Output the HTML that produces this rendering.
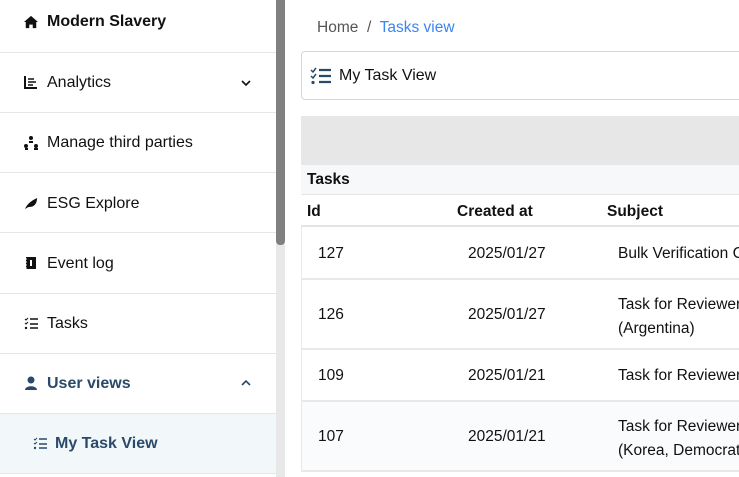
<!DOCTYPE html>
<html><head><style>
*{box-sizing:border-box;margin:0;padding:0}
html,body{width:739px;height:477px;overflow:hidden}
body{font-family:"Liberation Sans",sans-serif;background:#fff;position:relative;color:#111}
.sb{position:absolute;left:0;top:0;width:276px;height:477px}
.row{position:absolute;left:0;width:276px;height:60px;border-bottom:1.5px solid #e6e6e6;font-size:16px}
.row .ic{position:absolute;left:24px;width:14px;height:14px}
.row span.t{position:absolute;left:47px}
.chev{position:absolute;left:241px;width:10px;height:8px}
.scroll{position:absolute;left:276px;top:0;width:9px;height:477px;background:#e8e8e8}
.thumb{position:absolute;left:276px;top:0;width:9px;height:245px;background:#808080;border-radius:0 0 4px 4px}
.bc{position:absolute;left:317px;top:19px;font-size:15.5px;color:#555}
.bc b{font-weight:normal;color:#3d84f0}
.card{position:absolute;left:301px;top:51px;width:438px;height:49px;border:1px solid #d6d6d6;border-right:none;border-radius:4px 0 0 4px}
.card span{position:absolute;left:37px;top:15px;font-size:16px}
.grey{position:absolute;left:301px;top:116px;width:438px;height:49px;background:#e7e7e7}
.tk{position:absolute;left:301px;top:165px;width:438px;height:30px;background:#f7f8fa;border-bottom:1px solid #e6e6e6;font-weight:bold;font-size:15.5px;padding:6px 0 0 6px}
.hd{position:absolute;left:301px;top:195px;width:438px;height:32px;border-bottom:2px solid #e4e4e4;font-weight:bold;font-size:15.5px}
.hd span,.tr span{position:absolute}
.tr{position:absolute;left:301px;width:438px;border-bottom:2px solid #e8e8e8;border-left:1px solid #e8e8e8;font-size:15.5px;overflow:hidden}
</style></head><body>
<div class="sb">
<div class="row" style="top:0;height:53px;font-weight:bold"><svg class="ic" viewBox="0 0 16 14" style="top:15px"><path d="M8 0L0 7h2v7h4v-4h4v4h4V7h2z" fill="#111"/></svg><span class="t" style="top:13px">Modern Slavery</span></div>
<div class="row" style="top:53px"><svg class="ic" viewBox="0 0 14 14" style="top:22px"><path d="M1 1v12h12" stroke="#111" stroke-width="2" fill="none"/><path d="M4 4h6M4 7h8M4 10h5" stroke="#111" stroke-width="1.6"/></svg><span class="t" style="top:21px">Analytics</span><svg class="chev" style="top:26px" viewBox="0 0 10 8"><path d="M1 2l4 4 4-4" stroke="#111" stroke-width="1.6" fill="none"/></svg></div>
<div class="row" style="top:113px"><svg class="ic" viewBox="0 0 14 14" style="top:23px"><circle cx="7" cy="2" r="2" fill="#111"/><circle cx="2" cy="10" r="2" fill="#111"/><circle cx="12" cy="10" r="2" fill="#111"/><path d="M1 12h3v2H1zM10 12h4v2h-4zM5 5h4v2H5z" fill="#111"/></svg><span class="t" style="top:21px">Manage third parties</span></div>
<div class="row" style="top:173px"><svg class="ic" viewBox="0 0 14 14" style="top:23px"><path d="M1 13C3 8 7 5 13 2c0 6-3 9-8 9-1 0-2 1-4 2z" fill="#111"/></svg><span class="t" style="top:22px">ESG Explore</span></div>
<div class="row" style="top:234px"><svg class="ic" viewBox="0 0 14 14" style="top:22px"><rect x="2" y="1" width="10" height="12" fill="#111"/><rect x="6" y="4" width="2" height="6" fill="#fff"/><path d="M1 3h2M1 6h2M1 9h2M1 12h2" stroke="#fff"/></svg><span class="t" style="top:21px">Event log</span></div>
<div class="row" style="top:294px"><svg class="ic" viewBox="0 0 14 14" style="top:23px"><path d="M1 2l1 1 2-2M1 6l1 1 2-2" stroke="#111" fill="none"/><circle cx="2" cy="11" r="1.2" fill="#111"/><path d="M6 2h8M6 7h8M6 11h8" stroke="#111" stroke-width="1.6"/></svg><span class="t" style="top:21px">Tasks</span></div>
<div class="row" style="top:354px;color:#2a4a6a;font-weight:bold"><svg class="ic" viewBox="0 0 14 14" style="top:22px"><circle cx="7" cy="4" r="3.5" fill="#2a4a6a"/><path d="M1 14c0-5 12-5 12 0z" fill="#2a4a6a"/></svg><span class="t" style="top:21px">User views</span><svg class="chev" style="top:25px" viewBox="0 0 10 8"><path d="M1 6l4-4 4 4" stroke="#2a4a6a" stroke-width="1.6" fill="none"/></svg></div>
<div class="row" style="top:414px;background:#f2f7fa;color:#2a4a6a;font-weight:bold"><svg class="ic" viewBox="0 0 14 14" style="left:33px;top:23px"><path d="M1 2l1 1 2-2M1 6l1 1 2-2" stroke="#2a4a6a" fill="none"/><circle cx="2" cy="11" r="1.2" fill="#2a4a6a"/><path d="M6 2h8M6 7h8M6 11h8" stroke="#2a4a6a" stroke-width="1.6"/></svg><span class="t" style="left:55px;top:21px">My Task View</span></div>
</div>
<div class="scroll"></div><div class="thumb"></div>
<div class="bc">Home &nbsp;/&nbsp; <b>Tasks view</b></div>
<div class="card"><svg style="position:absolute;left:8px;top:15px" width="22" height="18" viewBox="0 0 22 18"><path d="M1 3l2 2 3-4M1 9l2 2 3-4" stroke="#2a4a6a" stroke-width="1.5" fill="none"/><circle cx="3" cy="15.5" r="1.6" fill="#2a4a6a"/><path d="M9 3h12M9 9h12M9 15h12" stroke="#2a4a6a" stroke-width="2.2"/></svg><span>My Task View</span></div>
<div class="grey"></div>
<div class="tk">Tasks</div>
<div class="hd"><span style="left:6px;top:8px">Id</span><span style="left:156px;top:8px">Created at</span><span style="left:306px;top:8px">Subject</span></div>
<div class="tr" style="top:227px;height:53px"><span style="left:16px;top:18px">127</span><span style="left:166px;top:18px">2025/01/27</span><span style="left:316px;top:18px;white-space:nowrap">Bulk Verification Completed</span></div>
<div class="tr" style="top:280px;height:70px"><span style="left:16px;top:26px">126</span><span style="left:166px;top:26px">2025/01/27</span><span style="left:316px;top:13px;line-height:24px;white-space:nowrap">Task for Reviewer<br>(Argentina)</span></div>
<div class="tr" style="top:350px;height:52px"><span style="left:16px;top:17px">109</span><span style="left:166px;top:17px">2025/01/21</span><span style="left:316px;top:17px;white-space:nowrap">Task for Reviewer</span></div>
<div class="tr" style="top:402px;height:70px;background:#fafbfd"><span style="left:16px;top:26px">107</span><span style="left:166px;top:26px">2025/01/21</span><span style="left:316px;top:13px;line-height:24px;white-space:nowrap">Task for Reviewer<br>(Korea, Democratic)</span></div>
</body></html>
